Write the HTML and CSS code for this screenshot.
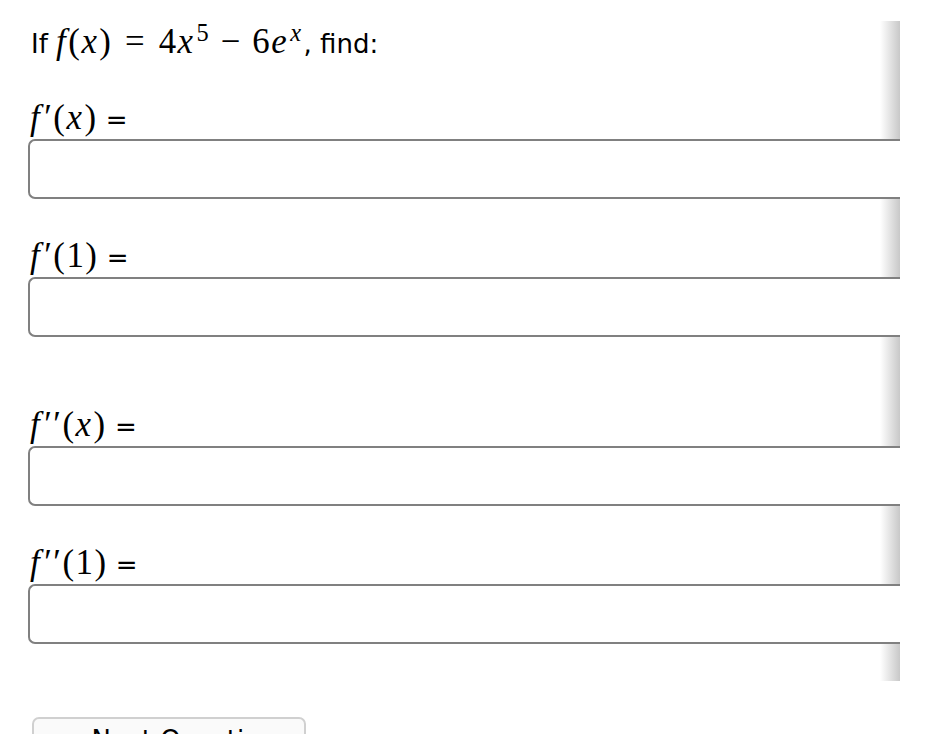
FILE: index.html
```html
<!DOCTYPE html>
<html lang="en">
<head>
    <meta charset="UTF-8">
    <meta name="viewport" content="width=device-width, initial-scale=1.0">
    <title>Derivatives</title>
    <link rel="stylesheet" href="styles.css">
</head>
<body>
    <div class="question">
        <p class="prompt">
            If <span class="math"><i>f</i>(<i>x</i>)<span class="rel">=</span>4<i>x</i><sup>5</sup><span class="bin">−</span>6<i>e</i><sup><i>x</i></sup></span>, find:
        </p>

        <!-- first derivative -->
        <label class="answer-label" for="ans1"><span class="math"><i>f</i><span class="prime">′</span>(<i>x</i>)</span> =</label>
        <input class="answer" type="text" id="ans1" autocomplete="off">

        <label class="answer-label" for="ans2"><span class="math"><i>f</i><span class="prime">′</span>(1)</span> =</label>
        <input class="answer" type="text" id="ans2" autocomplete="off">

        <!-- second derivative -->
        <div class="part-gap"></div>

        <label class="answer-label" for="ans3"><span class="math"><i>f</i><span class="prime">′′</span>(<i>x</i>)</span> =</label>
        <input class="answer" type="text" id="ans3" autocomplete="off">

        <label class="answer-label" for="ans4"><span class="math"><i>f</i><span class="prime">′′</span>(1)</span> =</label>
        <input class="answer last" type="text" id="ans4" autocomplete="off">
    </div>

    <div class="actions">
        <button class="next-btn" type="button">→ Next Question</button>
    </div>
</body>
</html>
```

FILE: styles.css
```css
:root {
    --text-color: #000;
    --border-color: #808080;
    --shade-color: #c8c8c8;
}

body {
    font-family: 'DejaVu Sans', Verdana, sans-serif;
    font-size: 26px;
    color: var(--text-color);
    background-color: white;
    margin: 0;
    overflow: hidden;
}

.question {
    display: flow-root;
    width: 872px;
    margin: 21px 0 0 28px;
    padding: 3px 0 0;
    background: linear-gradient(to right, rgba(255, 255, 255, 0), var(--shade-color)) no-repeat right top / 20px 100%;
}

.prompt {
    margin: 0 0 37px;
    padding-left: 3px;
    line-height: 40px;
    height: 40px;
    white-space: nowrap;
}

.math {
    font-family: 'Liberation Serif', 'DejaVu Serif', serif;
    font-size: 1.34em;
    letter-spacing: 1.5px;
    line-height: 30px;
}

.math i {
    font-style: italic;
    margin-right: 1px;
}

.math sup {
    font-size: 0.7em;
    line-height: 16px;
    vertical-align: 0.5em;
    margin-left: 1px;
}

.math sup i {
    font-size: 1em;
}

.rel {
    margin: 0 0.36em;
}

.bin {
    margin: 0 0.3em;
}

.prime {
    font-style: normal;
    margin-left: 2px;
}

.answer-label {
    display: block;
    height: 38px;
    line-height: 38px;
    padding-left: 2px;
    white-space: nowrap;
}

.answer {
    display: block;
    box-sizing: border-box;
    width: 100%;
    height: 60px;
    margin: 0 0 40px;
    padding: 0 12px;
    border: 2px solid var(--border-color);
    border-right: none;
    border-radius: 7px 0 0 7px;
    background-color: white;
    font-family: inherit;
    font-size: 24px;
}

.answer.last {
    margin-bottom: 37px;
}

.answer:focus {
    outline: none;
}

.part-gap {
    height: 31px;
}

.actions {
    margin: 36px 0 0 32px;
}

.next-btn {
    width: 274px;
    padding: 3px 0;
    font-family: inherit;
    font-size: 26px;
    line-height: 36px;
    color: var(--text-color);
    background-color: #fafafa;
    border: 2px solid #d0d0d0;
    border-radius: 7px;
    cursor: pointer;
}
```
